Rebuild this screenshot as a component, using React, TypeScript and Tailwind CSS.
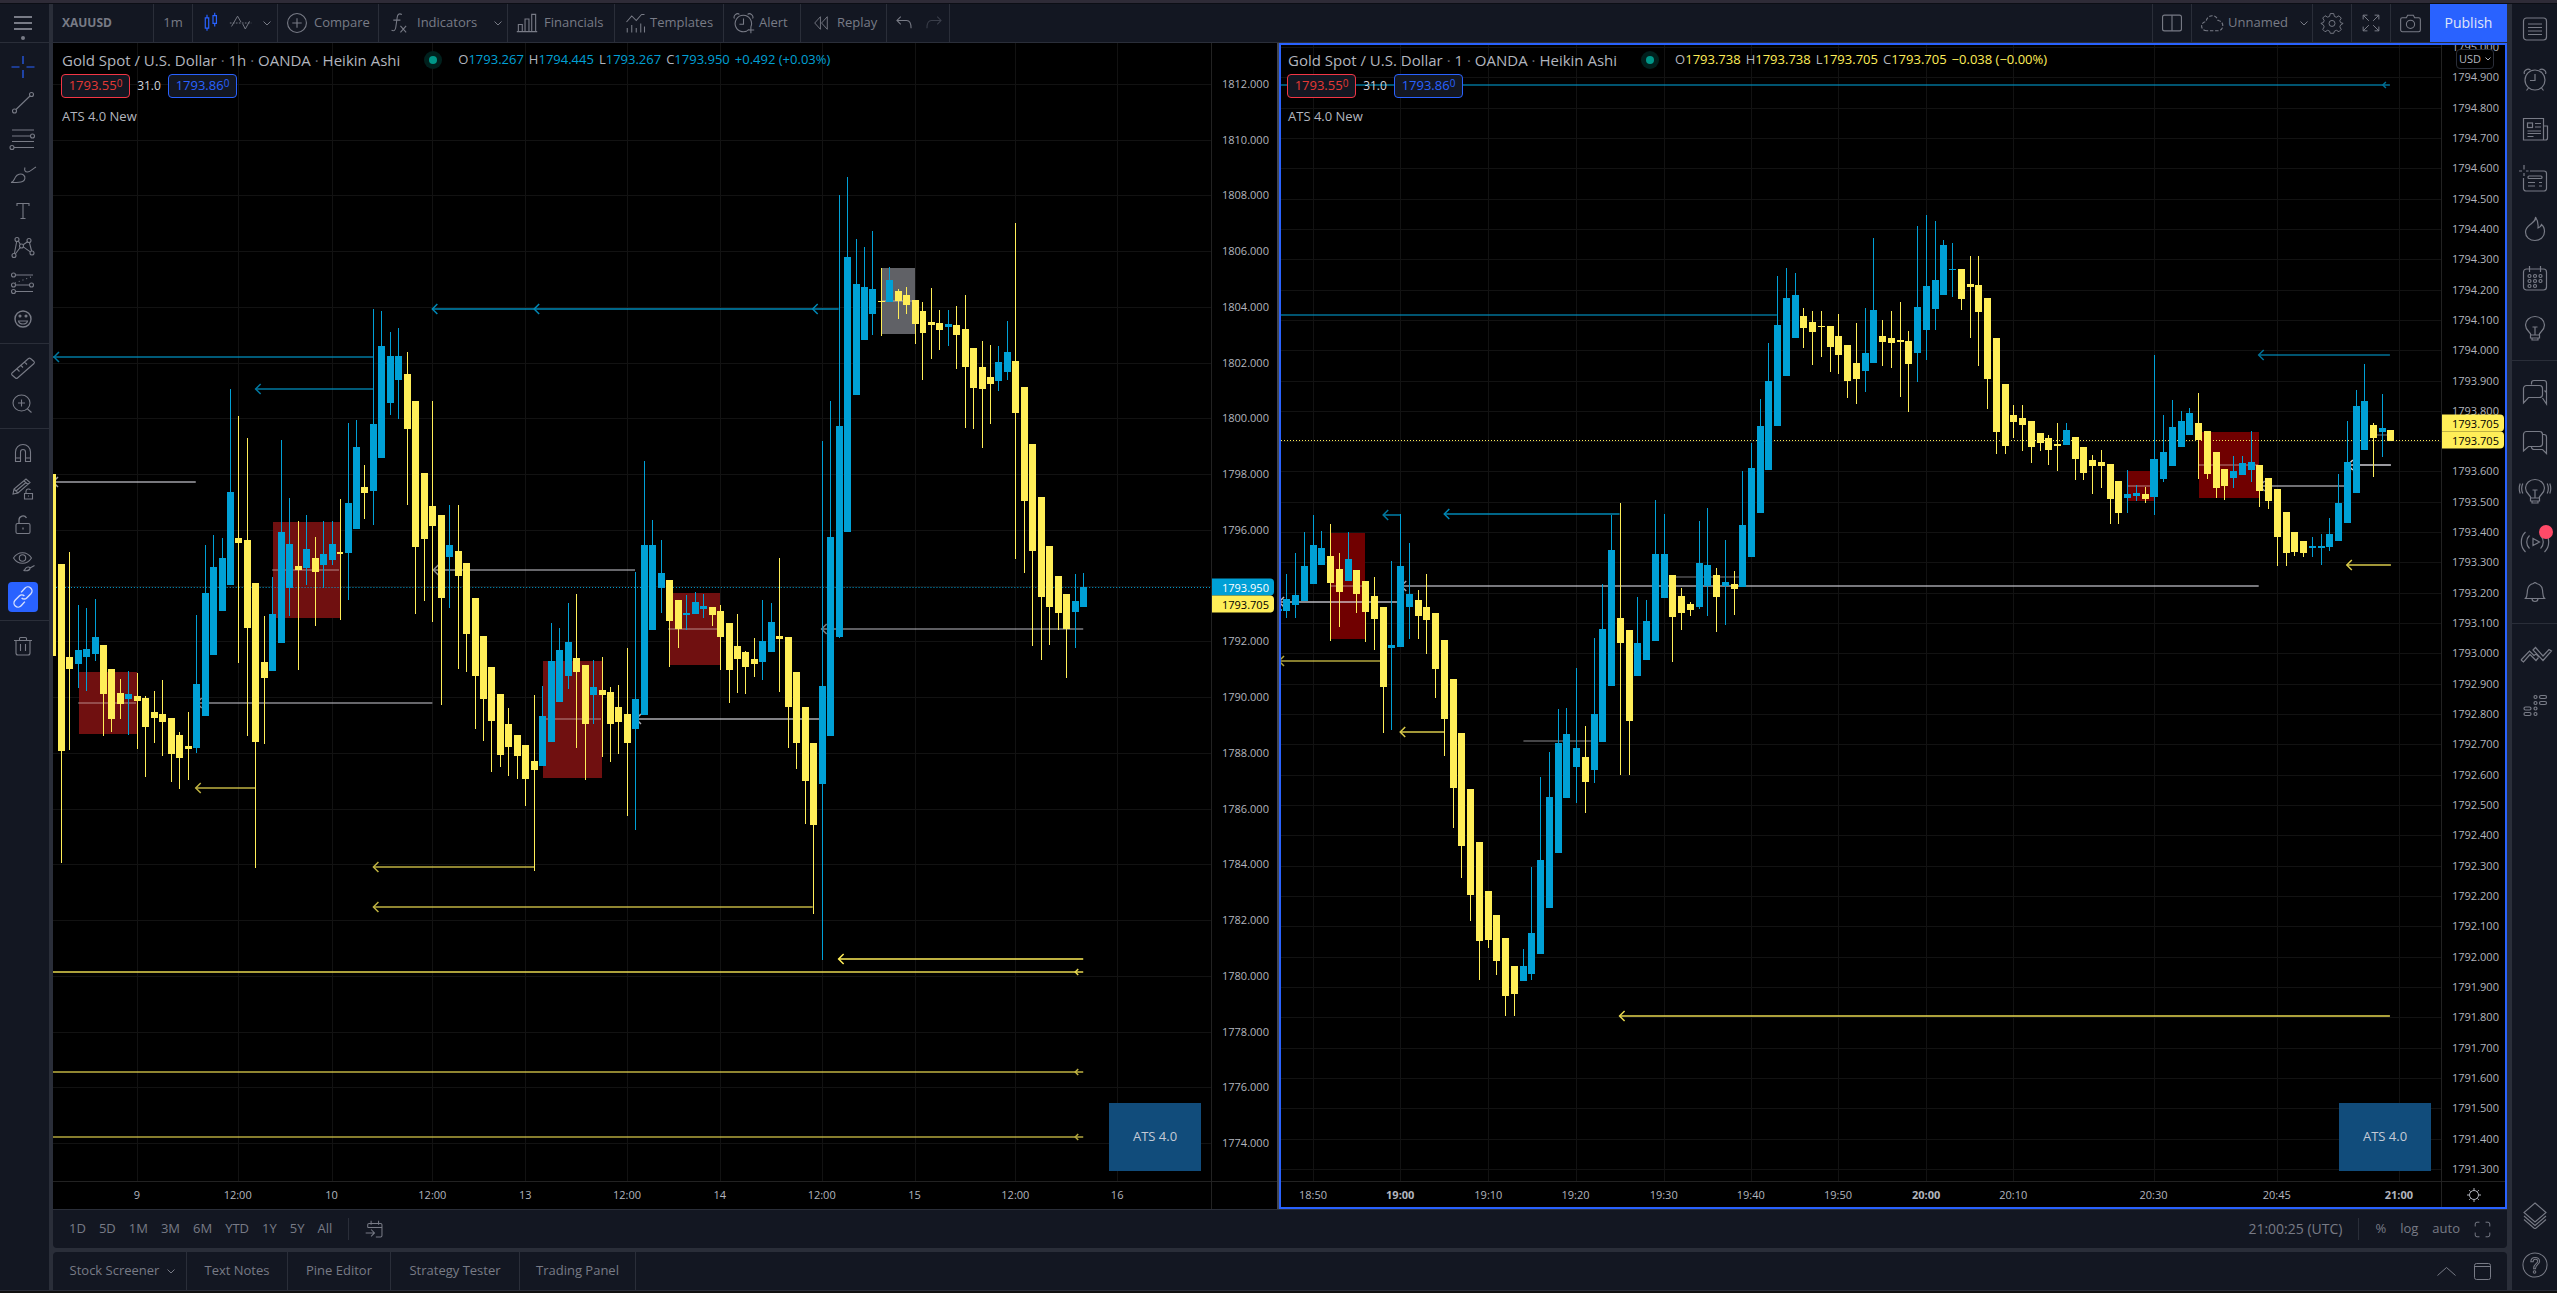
import React from 'react';

type Candle = [number, number, number, number, number, 'u' | 'd'];
type Level = { x1: number; x2: number; y: number; c: 'b' | 'w' | 'y'; o: number; heads?: number[]; small?: boolean };
type Zone = { x: number; y: number; w: number; h: number; fill: string; mid?: number };

/* Each candle: x, high, body top, body bottom, low, direction */
const hourly: Candle[] = [
  [52, 474, 474, 656, 656, 'd'], [61, 564, 564, 751, 863, 'd'], [69, 552, 657, 669, 750, 'd'], [78, 605, 650, 664, 688, 'u'],
  [86, 608, 649, 657, 691, 'u'], [95, 599, 637, 654, 661, 'u'], [103, 645, 645, 694, 736, 'd'], [111, 669, 669, 719, 732, 'd'],
  [120, 679, 693, 704, 719, 'd'], [128, 671, 694, 699, 735, 'u'], [137, 673, 696, 701, 749, 'd'], [145, 696, 698, 727, 777, 'd'],
  [154, 691, 712, 718, 743, 'd'], [162, 680, 714, 722, 756, 'd'], [171, 718, 718, 754, 782, 'd'], [179, 732, 735, 758, 789, 'd'],
  [188, 712, 746, 749, 780, 'd'], [196, 615, 684, 748, 753, 'u'], [205, 545, 593, 716, 716, 'u'], [213, 535, 567, 655, 655, 'u'],
  [222, 538, 558, 611, 611, 'u'], [230, 389, 492, 585, 585, 'u'], [238, 416, 538, 543, 663, 'd'], [247, 438, 540, 628, 736, 'd'],
  [255, 583, 583, 742, 868, 'd'], [264, 616, 662, 678, 744, 'd'], [272, 577, 614, 671, 671, 'u'], [281, 440, 532, 643, 643, 'u'],
  [289, 498, 544, 588, 616, 'u'], [298, 521, 566, 570, 670, 'd'], [306, 515, 549, 568, 585, 'u'], [315, 537, 558, 572, 626, 'd'],
  [323, 521, 554, 565, 588, 'u'], [332, 521, 544, 560, 565, 'u'], [340, 499, 552, 554, 620, 'd'], [349, 423, 503, 553, 600, 'u'],
  [357, 420, 447, 529, 529, 'u'], [365, 465, 487, 493, 519, 'd'], [374, 309, 424, 491, 525, 'u'], [382, 311, 346, 458, 458, 'u'],
  [391, 332, 356, 403, 415, 'u'], [399, 328, 356, 380, 419, 'u'], [408, 352, 374, 429, 505, 'd'], [416, 401, 401, 547, 614, 'd'],
  [425, 473, 473, 539, 601, 'd'], [433, 401, 506, 526, 622, 'd'], [442, 515, 515, 598, 705, 'd'], [450, 505, 545, 557, 608, 'u'],
  [459, 505, 551, 576, 669, 'd'], [467, 563, 563, 634, 672, 'd'], [476, 598, 598, 676, 729, 'd'], [484, 636, 636, 699, 741, 'd'],
  [492, 667, 667, 721, 772, 'd'], [501, 694, 694, 755, 767, 'd'], [509, 708, 724, 747, 776, 'd'], [518, 735, 735, 756, 779, 'd'],
  [526, 745, 745, 779, 806, 'd'], [535, 695, 761, 770, 871, 'd'], [543, 686, 716, 766, 766, 'u'], [552, 623, 661, 742, 742, 'u'],
  [560, 628, 650, 702, 702, 'u'], [569, 603, 642, 676, 689, 'u'], [577, 594, 658, 672, 748, 'd'], [586, 665, 665, 724, 780, 'd'],
  [594, 660, 687, 695, 724, 'u'], [603, 657, 690, 695, 757, 'd'], [611, 687, 692, 724, 762, 'd'], [619, 685, 707, 722, 754, 'd'],
  [628, 648, 714, 743, 816, 'd'], [636, 572, 699, 729, 830, 'u'], [645, 461, 545, 715, 715, 'u'], [653, 520, 545, 630, 630, 'u'],
  [662, 540, 573, 588, 613, 'u'], [670, 580, 580, 621, 667, 'd'], [679, 600, 600, 629, 648, 'd'], [687, 595, 613, 615, 630, 'u'],
  [696, 592, 602, 614, 614, 'u'], [704, 594, 606, 609, 618, 'u'], [713, 607, 607, 615, 626, 'd'], [721, 605, 611, 637, 670, 'd'],
  [730, 623, 623, 670, 703, 'd'], [738, 614, 646, 659, 693, 'd'], [746, 651, 652, 667, 694, 'd'], [755, 638, 659, 664, 677, 'd'],
  [763, 600, 641, 662, 680, 'u'], [772, 603, 622, 652, 652, 'u'], [780, 558, 636, 639, 692, 'd'], [789, 637, 637, 707, 748, 'd'],
  [797, 672, 672, 743, 769, 'd'], [806, 707, 707, 781, 824, 'd'], [814, 743, 743, 825, 914, 'd'], [823, 441, 686, 784, 960, 'u'],
  [831, 401, 537, 736, 736, 'u'], [840, 195, 426, 637, 638, 'u'], [848, 177, 257, 532, 532, 'u'], [857, 239, 284, 395, 395, 'u'],
  [865, 247, 287, 340, 340, 'u'], [873, 231, 289, 314, 335, 'u'], [882, 268, 301, 302, 336, 'd'], [890, 267, 280, 302, 302, 'u'],
  [899, 289, 291, 301, 319, 'd'], [907, 287, 295, 305, 314, 'd'], [916, 300, 300, 324, 344, 'd'], [924, 302, 311, 333, 380, 'd'],
  [933, 288, 322, 325, 359, 'd'], [941, 310, 323, 330, 350, 'd'], [950, 310, 324, 327, 346, 'u'], [958, 306, 325, 335, 369, 'd'],
  [967, 295, 329, 367, 428, 'd'], [975, 348, 348, 388, 429, 'd'], [984, 341, 367, 389, 448, 'd'], [992, 345, 377, 384, 424, 'd'],
  [1000, 346, 362, 381, 391, 'u'], [1009, 321, 352, 372, 380, 'u'], [1017, 223, 361, 413, 559, 'd'], [1026, 387, 387, 501, 573, 'd'],
  [1034, 444, 444, 551, 646, 'd'], [1043, 497, 497, 597, 660, 'd'], [1051, 546, 546, 607, 645, 'd'], [1060, 576, 576, 613, 630, 'd'],
  [1068, 594, 594, 629, 678, 'd'], [1077, 574, 601, 612, 648, 'u'], [1085, 573, 587, 607, 607, 'u'],
];

const minute: Candle[] = [
  [1280, 600, 609, 611, 611, 'u'], [1288, 574, 599, 611, 618, 'u'], [1297, 553, 595, 605, 618, 'u'], [1306, 532, 566, 601, 601, 'u'],
  [1315, 515, 545, 584, 584, 'u'], [1323, 531, 548, 565, 565, 'u'], [1332, 524, 556, 583, 641, 'd'], [1341, 553, 569, 592, 627, 'd'],
  [1350, 532, 559, 581, 581, 'u'], [1358, 570, 570, 594, 613, 'd'], [1367, 581, 581, 612, 642, 'd'], [1376, 577, 596, 619, 650, 'd'],
  [1385, 607, 607, 687, 733, 'd'], [1393, 561, 645, 648, 730, 'u'], [1402, 514, 566, 647, 647, 'u'], [1411, 543, 594, 607, 639, 'u'],
  [1420, 590, 600, 616, 639, 'd'], [1428, 574, 607, 620, 654, 'd'], [1437, 613, 613, 669, 698, 'd'], [1446, 640, 640, 719, 756, 'd'],
  [1455, 679, 679, 788, 828, 'd'], [1463, 733, 733, 846, 878, 'd'], [1472, 789, 789, 895, 921, 'd'], [1481, 842, 842, 941, 980, 'd'],
  [1490, 891, 891, 940, 948, 'd'], [1498, 915, 915, 961, 975, 'd'], [1507, 938, 938, 996, 1016, 'd'], [1516, 966, 966, 994, 1016, 'd'],
  [1525, 949, 966, 981, 981, 'u'], [1533, 867, 933, 974, 980, 'u'], [1542, 777, 860, 954, 954, 'u'], [1551, 752, 797, 908, 908, 'u'],
  [1560, 709, 743, 853, 853, 'u'], [1568, 708, 734, 798, 798, 'u'], [1577, 668, 748, 767, 803, 'u'], [1586, 726, 757, 782, 813, 'd'],
  [1595, 638, 714, 770, 783, 'u'], [1603, 584, 629, 742, 742, 'u'], [1612, 515, 550, 686, 686, 'u'], [1621, 503, 618, 643, 775, 'd'],
  [1630, 630, 630, 721, 775, 'd'], [1638, 597, 643, 676, 676, 'u'], [1647, 600, 621, 660, 660, 'u'], [1656, 500, 554, 641, 641, 'u'],
  [1665, 514, 554, 598, 598, 'u'], [1673, 575, 575, 617, 662, 'd'], [1682, 588, 596, 613, 630, 'd'], [1691, 602, 604, 610, 616, 'd'],
  [1700, 521, 563, 607, 609, 'u'], [1708, 508, 565, 586, 616, 'u'], [1717, 568, 575, 597, 632, 'd'], [1726, 540, 582, 586, 625, 'u'],
  [1735, 571, 584, 589, 615, 'd'], [1743, 471, 525, 587, 587, 'u'], [1752, 443, 468, 557, 557, 'u'], [1761, 399, 426, 513, 513, 'u'],
  [1769, 343, 381, 470, 470, 'u'], [1778, 276, 325, 426, 426, 'u'], [1787, 268, 298, 376, 376, 'u'], [1796, 273, 295, 338, 338, 'u'],
  [1804, 308, 316, 328, 348, 'd'], [1813, 311, 322, 332, 365, 'd'], [1822, 311, 326, 327, 357, 'd'], [1831, 326, 326, 347, 372, 'd'],
  [1839, 314, 336, 355, 374, 'd'], [1848, 345, 345, 381, 398, 'd'], [1857, 323, 363, 379, 404, 'd'], [1866, 308, 353, 371, 392, 'u'],
  [1874, 238, 310, 363, 363, 'u'], [1883, 320, 336, 342, 366, 'd'], [1892, 311, 338, 343, 368, 'd'], [1901, 302, 340, 342, 397, 'd'],
  [1909, 331, 341, 364, 412, 'd'], [1918, 226, 307, 353, 382, 'u'], [1927, 215, 286, 330, 360, 'u'], [1936, 221, 280, 309, 330, 'u'],
  [1944, 240, 245, 295, 295, 'u'], [1953, 243, 269, 270, 297, 'u'], [1962, 269, 269, 299, 310, 'd'], [1971, 256, 284, 287, 338, 'd'],
  [1979, 256, 285, 312, 366, 'd'], [1988, 298, 298, 379, 409, 'd'], [1997, 338, 338, 432, 454, 'd'], [2006, 384, 384, 446, 454, 'd'],
  [2014, 405, 415, 422, 438, 'd'], [2023, 405, 418, 425, 451, 'd'], [2032, 421, 421, 447, 463, 'd'], [2041, 433, 433, 443, 451, 'd'],
  [2049, 435, 438, 450, 465, 'd'], [2058, 423, 444, 446, 471, 'd'], [2067, 423, 430, 445, 445, 'u'], [2076, 437, 437, 459, 480, 'd'],
  [2084, 447, 447, 473, 480, 'd'], [2093, 455, 460, 466, 494, 'd'], [2102, 450, 462, 466, 488, 'd'], [2111, 464, 464, 499, 524, 'd'],
  [2119, 481, 481, 513, 524, 'd'], [2128, 470, 494, 498, 513, 'u'], [2137, 485, 493, 496, 501, 'u'], [2146, 487, 494, 499, 503, 'd'],
  [2154, 355, 459, 497, 515, 'u'], [2163, 415, 452, 479, 482, 'u'], [2172, 400, 427, 466, 466, 'u'], [2181, 411, 421, 447, 447, 'u'],
  [2189, 408, 413, 435, 435, 'u'], [2198, 393, 423, 440, 479, 'd'], [2207, 431, 431, 474, 479, 'd'], [2216, 452, 452, 488, 498, 'd'],
  [2224, 469, 469, 486, 500, 'd'], [2233, 456, 471, 478, 488, 'u'], [2242, 456, 463, 475, 475, 'u'], [2251, 431, 462, 470, 482, 'u'],
  [2259, 465, 465, 491, 507, 'd'], [2268, 478, 478, 501, 509, 'd'], [2277, 489, 489, 537, 566, 'd'], [2286, 512, 512, 553, 566, 'd'],
  [2294, 532, 532, 552, 556, 'd'], [2303, 541, 541, 553, 557, 'd'], [2312, 537, 546, 548, 557, 'u'], [2321, 534, 546, 548, 565, 'u'],
  [2329, 518, 534, 547, 551, 'u'], [2338, 474, 503, 541, 541, 'u'], [2347, 421, 462, 523, 523, 'u'], [2356, 390, 406, 493, 493, 'u'],
  [2364, 364, 401, 450, 450, 'u'], [2373, 423, 425, 438, 477, 'd'], [2382, 394, 428, 432, 457, 'u'], [2390, 430, 430, 441, 441, 'd'],
];

const hourlyLevels: Level[] = [
  { x1: 53, x2: 374, y: 357, c: 'b', o: 0.75, heads: [54] },
  { x1: 256, x2: 374, y: 389, c: 'b', o: 0.75, heads: [256] },
  { x1: 433, x2: 840, y: 309, c: 'b', o: 0.85, heads: [433, 535, 814] },
  { x1: 53, x2: 196, y: 482, c: 'w', o: 0.7, heads: [53] },
  { x1: 433, x2: 636, y: 570, c: 'w', o: 0.6, heads: [434] },
  { x1: 196, x2: 433, y: 703, c: 'w', o: 0.6, heads: [197] },
  { x1: 636, x2: 821, y: 719, c: 'w', o: 0.75, heads: [637] },
  { x1: 823, x2: 1085, y: 629, c: 'w', o: 0.55, heads: [823] },
  { x1: 196, x2: 256, y: 788, c: 'y', o: 0.75, heads: [196] },
  { x1: 374, x2: 535, y: 867, c: 'y', o: 0.75, heads: [374] },
  { x1: 374, x2: 814, y: 907, c: 'y', o: 0.75, heads: [374] },
  { x1: 840, x2: 1085, y: 959, c: 'y', o: 1, heads: [840] },
  { x1: 53, x2: 1085, y: 972, c: 'y', o: 0.9, heads: [1077], small: true },
  { x1: 53, x2: 1085, y: 1072, c: 'y', o: 0.75, heads: [1077], small: true },
  { x1: 53, x2: 1085, y: 1137, c: 'y', o: 0.7, heads: [1077], small: true },
];

const minuteLevels: Level[] = [
  { x1: 1283, x2: 2390, y: 85, c: 'b', o: 0.7, heads: [2383], small: true },
  { x1: 1283, x2: 1778, y: 315, c: 'b', o: 0.7 },
  { x1: 1385, x2: 1402, y: 515, c: 'b', o: 0.75, heads: [1385] },
  { x1: 1446, x2: 1621, y: 514, c: 'b', o: 0.85, heads: [1446] },
  { x1: 2259, x2: 2390, y: 355, c: 'b', o: 0.7, heads: [2259] },
  { x1: 1283, x2: 1400, y: 602, c: 'w', o: 0.8, heads: [1281] },
  { x1: 1402, x2: 2259, y: 586, c: 'w', o: 0.7, heads: [1403] },
  { x1: 1525, x2: 1593, y: 741, c: 'w', o: 0.4 },
  { x1: 1673, x2: 1743, y: 577, c: 'w', o: 0.35 },
  { x1: 2259, x2: 2347, y: 486, c: 'w', o: 0.65, heads: [2260] },
  { x1: 2347, x2: 2391, y: 465, c: 'w', o: 0.9, heads: [2348] },
  { x1: 2377, x2: 2388, y: 435, c: 'w', o: 0.3 },
  { x1: 1283, x2: 1385, y: 661, c: 'y', o: 0.7, heads: [1281] },
  { x1: 1402, x2: 1446, y: 732, c: 'y', o: 0.85, heads: [1402] },
  { x1: 1621, x2: 2390, y: 1016, c: 'y', o: 0.9, heads: [1621] },
  { x1: 2347, x2: 2391, y: 565, c: 'y', o: 0.85, heads: [2347] },
];

const hourlyZones: Zone[] = [
  { x: 79, y: 672, w: 58, h: 62, fill: '#701010', mid: 703 },
  { x: 273, y: 522, w: 67, h: 96, fill: '#701010', mid: 570 },
  { x: 544, y: 661, w: 59, h: 117, fill: '#701010', mid: 719 },
  { x: 670, y: 593, w: 51, h: 72, fill: '#701010', mid: 629 },
  { x: 883, y: 229 + 39, w: 33, h: 66, fill: '#606166', mid: 301 },
];

const minuteZones: Zone[] = [
  { x: 1333, y: 533, w: 34, h: 106, fill: '#700000', mid: 586 },
  { x: 2129, y: 471, w: 26, h: 30, fill: '#700000', mid: 486 },
  { x: 2199, y: 432, w: 60, h: 66, fill: '#700000', mid: 465 },
];

const ink = { b: '#00a0d6', w: '#e6e6ee', y: '#ffee58' };

type Tick = { at: number; label: string; strong?: boolean };
type Tag = { at: number; label: string; blue?: boolean };
type Pane = {
  box: [number, number, number, number];
  candles: Candle[];
  levels: Level[];
  zones: Zone[];
  prices: Tick[];
  times: Tick[];
  last: number;
  lastInk: string;
  tags: Tag[];
};

const range = (n: number) => Array.from({ length: n }, (_, i) => i);

const left: Pane = {
  box: [53, 43, 1160, 1138],
  candles: hourly,
  levels: hourlyLevels,
  zones: hourlyZones,
  prices: range(20).map((i) => ({ at: Math.round(84 + i * 55.74), label: `${1812 - i * 2}.000` })),
  times: [
    { at: 137, label: '9' }, { at: 238, label: '12:00' }, { at: 332, label: '10' }, { at: 433, label: '12:00' },
    { at: 526, label: '13' }, { at: 628, label: '12:00' }, { at: 721, label: '14' }, { at: 823, label: '12:00' },
    { at: 916, label: '15' }, { at: 1017, label: '12:00' }, { at: 1119, label: '16' },
  ],
  last: 587,
  lastInk: '#00a0d6',
  tags: [{ at: 587, label: '1793.950', blue: true }, { at: 604, label: '1793.705' }],
};

const right: Pane = {
  box: [1283, 45, 1158, 1136],
  candles: minute,
  levels: minuteLevels,
  zones: minuteZones,
  prices: range(38).map((i) => ({ at: Math.round(47 + i * 30.32), label: (1795 - i * 0.1).toFixed(3) })),
  times: [
    { at: 1315, label: '18:50' }, { at: 1402, label: '19:00', strong: true }, { at: 1490, label: '19:10' }, { at: 1577, label: '19:20' },
    { at: 1665, label: '19:30' }, { at: 1752, label: '19:40' }, { at: 1839, label: '19:50' }, { at: 1927, label: '20:00', strong: true },
    { at: 2014, label: '20:10' }, { at: 2154, label: '20:30' }, { at: 2277, label: '20:45' }, { at: 2399, label: '21:00', strong: true },
  ],
  last: 440,
  lastInk: '#ffee58',
  tags: [{ at: 423, label: '1793.705' }, { at: 440, label: '1793.705' }],
};

function Plot({ pane }: { pane: Pane }) {
  const [bx, by, bw, bh] = pane.box;
  return (
    <svg className="absolute inset-0 h-full w-full" viewBox={pane.box.join(' ')} preserveAspectRatio="none" aria-hidden="true">
      <g fill="#ffffff" opacity="0.07" shapeRendering="crispEdges">
        {pane.prices.map((t) => <rect key={t.label} x={bx} y={t.at} width={bw} height="1" />)}
        {pane.times.map((t) => <rect key={t.at} x={t.at} y={by} width="1" height={bh} />)}
      </g>
      {pane.zones.map((z) => (
        <g key={z.x} shapeRendering="crispEdges">
          <rect x={z.x} y={z.y} width={z.w} height={z.h} fill={z.fill} />
          {z.mid && <rect x={z.x - 1} y={z.mid - 1} width={z.w} height="2" fill="#ffffff" opacity="0.25" />}
        </g>
      ))}
      {pane.levels.map((l, i) => {
        const r = l.small ? 3 : 5;
        return (
          <g key={i} stroke={ink[l.c]} opacity={l.o} fill="none">
            <path d={`M${l.x1} ${l.y}H${l.x2}`} strokeWidth="1.6" />
            {l.heads?.map((h) => <path key={h} d={`M${h + r} ${l.y - r}l${-r} ${r}l${r} ${r}`} strokeWidth="1.5" />)}
          </g>
        );
      })}
      <path d={`M${bx} ${pane.last + 0.5}H${bx + bw}`} stroke={pane.lastInk} strokeDasharray="1 2" shapeRendering="crispEdges" />
      <g shapeRendering="crispEdges">
        {pane.candles.map(([x, hi, top, bottom, lo, dir]) => (
          <g key={x} fill={dir === 'u' ? '#00a0d6' : '#ffee58'}>
            <rect x={x} y={hi} width="1" height={lo - hi} />
            <rect x={x - 3} y={top} width="7" height={bottom - top} />
          </g>
        ))}
      </g>
    </svg>
  );
}

type LegendProps = { interval: string; ohlc: string[]; change: string; tone: string; inset: string };

function Legend({ interval, ohlc, change, tone, inset }: LegendProps) {
  return (
    <div className={`absolute top-0 left-0 ${inset} text-[#b2b5be]`}>
      <div className="flex h-5 items-center whitespace-nowrap">
        <h2 className="text-[15px]">
          Gold Spot / U.S. Dollar <span className="text-[#6a6d78]">·</span> {interval} <span className="text-[#6a6d78]">·</span> OANDA{' '}
          <span className="text-[#6a6d78]">·</span> Heikin Ashi
        </h2>
        <span className="ml-6 flex size-[18px] items-center justify-center rounded-full bg-[#00201d]">
          <span className="size-2 rounded-full bg-[#009688]" />
        </span>
        <p className="ml-4 flex gap-[5px] text-[13px]">
          {['O', 'H', 'L', 'C'].map((k, i) => (
            <span key={k}>{k}<span className={tone}>{ohlc[i]}</span></span>
          ))}
          <span className={tone}>{change}</span>
        </p>
      </div>
      <div className="-ml-px mt-1 flex items-center">
        <button className="flex h-6 w-[69px] items-center justify-center rounded border border-[#f23645] bg-[#131722] text-[13px] text-[#e53935]">
          1793.55<sup className="top-[-3px] text-[10px]">0</sup>
        </button>
        <span className="w-[38px] text-center text-xs text-[#d1d4dc]">31.0</span>
        <button className="flex h-6 w-[69px] items-center justify-center rounded border border-[#2962ff] bg-[#131722] text-[13px] text-[#2962ff]">
          1793.86<sup className="top-[-3px] text-[10px]">0</sup>
        </button>
      </div>
      <p className="mt-2.5 text-[13px] leading-4">ATS 4.0 New</p>
    </div>
  );
}

function Chart({ pane, legend, active }: { pane: Pane; legend: LegendProps; active?: boolean }) {
  const [bx, by, bw, bh] = pane.box;
  return (
    <section className={`flex min-w-0 flex-1 flex-col bg-black font-['Open_Sans',sans-serif] ${active ? 'border-2 border-[#2962ff]' : ''}`}>
      <div className="flex flex-1">
        <div className="relative min-w-0 flex-1 overflow-hidden">
          <Plot pane={pane} />
          <Legend {...legend} />
          <div className="absolute right-2.5 bottom-2.5 flex h-17 w-[92px] items-center justify-center bg-[#114c7b] text-[13px] text-[#c5cbd6]">ATS 4.0</div>
        </div>
        <div className={`relative shrink-0 overflow-hidden border-l border-[#222222] text-[11px] text-[#b2b5be] ${active ? 'w-16' : 'w-[66px]'}`}>
          {pane.prices.map((t) => (
            <span key={t.label} className="absolute left-2.5 -translate-y-1/2 leading-4" style={{ top: `${((t.at - by) / bh) * 100}%` }}>{t.label}</span>
          ))}
          {pane.tags.map((t) => (
            <span
              key={t.at}
              className={`absolute left-0 h-[17px] w-[62px] -translate-y-1/2 rounded-r-sm pl-2.5 leading-[17px] ${t.blue ? 'bg-[#00a0d6] text-white' : 'bg-[#ffee58] text-black'}`}
              style={{ top: `${((t.at - by) / bh) * 100}%` }}
            >
              {t.label}
            </span>
          ))}
          {active && (
            <button className="absolute top-1 left-3.5 flex h-5 w-[38px] items-center justify-center gap-1 rounded border border-[#2a2e39] bg-black text-[11px]">
              USD
              <svg width="6" height="4" viewBox="0 0 6 4" fill="none" stroke="currentColor"><path d="M.5.5 3 3 5.5.5" /></svg>
            </button>
          )}
        </div>
      </div>
      <div className={`flex shrink-0 border-t border-[#222222] text-[11px] text-[#b2b5be] ${active ? 'h-[26px]' : 'h-7'}`}>
        <div className="relative min-w-0 flex-1 overflow-hidden">
          {pane.times.map((t) => (
            <span
              key={t.at}
              className={`absolute top-[5px] -translate-x-1/2 leading-4 ${t.strong ? 'font-bold' : ''}`}
              style={{ left: `${((t.at - bx) / bw) * 100}%` }}
            >
              {t.label}
            </span>
          ))}
        </div>
        <div className={`flex shrink-0 items-center justify-center border-l border-[#222222] ${active ? 'w-16' : 'w-[66px]'}`}>
          {active && (
            <button aria-label="Axis settings" className="text-[#b2b5be]">
              <svg width="16" height="16" viewBox="0 0 16 16" fill="none" stroke="currentColor">
                <circle cx="8" cy="8" r="4.5" />
                <path d="M8 1v2M8 13v2M1 8h2M13 8h2M3.2 3.2l1.4 1.4M11.4 11.4l1.4 1.4M3.2 12.8l1.4-1.4M11.4 4.6l1.4-1.4" />
              </svg>
            </button>
          )}
        </div>
      </div>
    </section>
  );
}

function Icon({ children, size = 28 }: { children: React.ReactNode; size?: number }) {
  return (
    <svg width={size} height={size} viewBox="0 0 28 28" fill="none" stroke="currentColor" strokeWidth="1.1" className="shrink-0" aria-hidden="true">
      {children}
    </svg>
  );
}

function Chevron() {
  return <svg width="8" height="5" viewBox="0 0 8 5" fill="none" stroke="currentColor" className="shrink-0" aria-hidden="true"><path d="M.5.5 4 4 7.5.5" /></svg>;
}

const drawing: { label: string; art: React.ReactNode }[][] = [
  [
    { label: 'Cross', art: <g stroke="#2962ff" strokeWidth="1.2"><path d="M14 3v8M14 17v8M2.500 14h8M17.500 14h8" /></g> },
    { label: 'Trend line', art: <><circle cx="5.500" cy="22" r="2" /><circle cx="22.500" cy="5.500" r="2" /><path d="M7 20.500 21 7" /></> },
    { label: 'Fibonacci lines', art: <><path d="M3 5h22M3 11h18M3 16.500h22M5 22.500h20" /><circle cx="23.500" cy="11" r="2" /><circle cx="3" cy="22.500" r="2" /></> },
    { label: 'Brush', art: <><path d="M2 21.500c3-.5 3-3 4.500-5.500 1.500-2.500 5.500-4 8-2 2.500 2 1.500 5.500-1 6.500-3 1.200-7 1-11.500 1zM27 6c-3 1.500-6 5-8.500 5C16 11 15 9 16 6.500" /></> },
    { label: 'Text', art: <path d="M8 9V6.500h12V9M14 6.500v15M11.500 21.500h5" /> },
    { label: 'Pattern', art: <><circle cx="8" cy="6.500" r="2" /><circle cx="20" cy="7.500" r="2" /><circle cx="12.500" cy="13" r="2" /><circle cx="5" cy="22.500" r="2" /><circle cx="23" cy="20" r="2" /><path d="M7.700 8.500 5.400 20.500M9.400 8l2 3.500M14.200 11.700l4.300-3M20.400 9.500l2.200 8.500M11.200 14.500 6.300 21M14.300 13.900l7 5" /></> },
    { label: 'Forecast', art: <><path d="M6 6h18M6 16h15M6 22.500h18" /><path d="m6 14 16-6" strokeDasharray="1 3" /><circle cx="4.500" cy="6" r="2" /><circle cx="4.500" cy="16" r="2" /><circle cx="22.500" cy="16" r="2" /><circle cx="4.500" cy="22.500" r="2" /></> },
    { label: 'Emoji', art: <><circle cx="14" cy="14" r="8" strokeWidth="1.4" /><path d="M9.500 16c1 4 8 4 9 0z" /><circle cx="11" cy="11" r="1" fill="currentColor" /><circle cx="17" cy="11" r="1" fill="currentColor" /></> },
  ],
  [
    { label: 'Measure', art: <><path d="m3 19 16.500-14.500a1.500 1.500 0 0 1 2 0l3.500 3a1.500 1.500 0 0 1 0 2L8.500 24a1.500 1.500 0 0 1-2 0L3 21a1.500 1.500 0 0 1 0-2zM8 15l2.500 2.500M12 11.500l2 2M15.500 8l2.500 2.500" /></> },
    { label: 'Zoom in', art: <><ellipse cx="12.500" cy="13" rx="8.500" ry="8" /><path d="M12.500 9.500v7M9 13h7M18.500 19l4 3.500" /></> },
  ],
  [
    { label: 'Magnet', art: <><path d="M6.500 22.500V13a7.500 7.500 0 0 1 15 0v9.500h-5V13a2.500 2.500 0 0 0-5 0v9.500zM6.500 19h5M16.500 19h5" /></> },
    { label: 'Stay in drawing mode', art: <><path d="m4 19 1-5L17 4l4 3.500L9 18zM5 14l4 4M15 6l4 3.500M7 16l10-8.500" /><path d="M15.500 18.500h8v5.500h-8zM17 18.500V16a2.500 2.500 0 0 1 4.500-1" /><path d="M19.500 20.500v1" /></> },
    { label: 'Lock drawings', art: <><rect x="7" y="12.500" width="14" height="10" rx="1.500" /><path d="M10 12.500V9a4 4 0 0 1 7.500-2M14 16.500v2" strokeWidth="1.300" /></> },
    { label: 'Hide drawings', art: <><path d="M4.500 11C9 4 18 4 22.500 11c-4.500 7-13.500 7-18 0z" /><circle cx="13.500" cy="11" r="3.200" /><path d="M14.500 23.500c3 .5 6 0 6.500-2s-3.500-2-4.300-.3c-.4 1-1 2-2.200 2.300zM25.500 18.500 21 21" /></> },
  ],
];

const panels: { label: string; art: React.ReactNode; live?: boolean }[][] = [
  [
    { label: 'Watchlist', art: <><rect x="2.500" y="3" width="23" height="22" rx="3" /><path d="M7 9h14M7 12.500h14M7 16h14M7 19.500h14" /></> },
    { label: 'Alerts', art: <><circle cx="14" cy="15" r="10" /><path d="M14 9v6.500H9M3.500 9c-1.500-3 3-6.500 6-4M24.500 9c1.500-3-3-6.500-6-4M7.500 23l-2 2.500M20.500 23l2 2.500" /></> },
    { label: 'News', art: <><path d="M2.500 25V3.500h20V25zM22.500 11h4v12c0 1.500-1 2-2 2h-22" /><rect x="6.500" y="8" width="5" height="4.500" /><path d="M14 8.500h6M14 12h6M6.500 16h13.500M6.500 18.500h13.500M6.500 21.500h6" /></> },
    { label: 'Data window', art: <><path d="M9 6h14a2.500 2.500 0 0 1 2.500 2.500v15A2.500 2.500 0 0 1 23 26H5a2.500 2.500 0 0 1-2.500-2.500V13M3 0v4.500M3 8v3M-2 6h3M5 6h2.500" /><rect x="7" y="11" width="14" height="2.500" rx="1" /><path d="M7 17.500h7M7 21h7M18 17.500h3M18 21h3" /></> },
    { label: 'Hotlists', art: <path d="M14.500 2c.5 3-1 4-4 6.500C7 11.500 4.500 13 4.500 17c0 5 4 8.500 9.500 8.500s9.500-4 9.500-9c0-3-1-5.500-3-7-.5 2-1.500 3-3.500 3.500.5-4-.5-8-2.500-11z" /> },
    { label: 'Calendar', art: <><rect x="2.500" y="4" width="23" height="21" rx="3" /><path d="M8.500 1v6M19.500 1v6" /><g><circle cx="8.500" cy="11" r="1.500" /><circle cx="14" cy="11" r="1.500" /><circle cx="19.500" cy="11" r="1.500" /><circle cx="8.500" cy="16" r="1.500" /><circle cx="14" cy="16" r="1.500" /><circle cx="19.500" cy="16" r="1.500" /><circle cx="8.500" cy="21" r="1.500" /><circle cx="14" cy="21" r="1.500" /></g></> },
    { label: 'My ideas', art: <path d="M10 20c-.5-3-5.500-4.500-5.500-10a9.500 8.500 0 0 1 19 0c0 5.500-5 7-5.500 10zM9.500 20h9v3h-9zM11 23v2h6v-2M14 20v-8M11.500 12h5" /> },
  ],
  [
    { label: 'Public chats', art: <path d="M10.500 6.500V5A2.500 2.500 0 0 1 13 2.500h10A2.500 2.500 0 0 1 25.500 5v21l-4-6M25.500 14.500l-2-2M5.500 7.500h13a3 3 0 0 1 3 3v6a3 3 0 0 1-3 3h-11l-5 5.500V10.500a3 3 0 0 1 3-3z" /> },
    { label: 'Private chats', art: <path d="M5.500 3.500h13a3 3 0 0 1 3 3v9a3 3 0 0 1-3 3h-11l-5 4.500V6.500a3 3 0 0 1 3-3zM21.500 6.500h1.500A2.500 2.500 0 0 1 25.500 9v16.500l-4-4H13A2.500 2.500 0 0 1 10.500 19" /> },
    { label: 'Ideas stream', art: <path d="M10 20c-.5-3-5.500-4.500-5.500-10a9.500 8.500 0 0 1 19 0c0 5.500-5 7-5.500 10zM9.500 20h9v3h-9zM11 23v2h6v-2M14 20v-8M11.500 12h5M1.800 5.500a12 12 0 0 0 0 10M-.8 5.500a14 14 0 0 0 0 10M26.200 5.500a12 12 0 0 1 0 10M28.800 5.500a14 14 0 0 1 0 10" /> },
    { label: 'Streams', live: true, art: <path d="M12 10.500v7l6.500-3.500zM8.500 7.500a9 9 0 0 0 0 13M4.500 4a14 14 0 0 0 0 20M19.500 7.500a9 9 0 0 1 0 13M23.500 4a14 14 0 0 1 0 20" /> },
    { label: 'Notifications', art: <path d="M4.500 20.500c2-2 1.500-5 2-8.500.5-3.500 3-6 6-6.500a1.800 1.800 0 0 1 3 0c3 .5 5.500 3 6 6.500.5 3.500 0 6.500 2 8.500zM11 20.500c0 4 6 4 6 0" /> },
  ],
  [
    { label: 'Order panel', art: <path d="m0 19 8.500-9 4.500 4.500 2-1.500 2.500 2.500M0 19l2.500 2 6.500-7.500 6 6 2.500-3M12 9l2.500-2.500 7.500 8.500L28 8.500l2.500 1.500-8.500 9.500z" /> },
    { label: 'Depth of market', art: <><rect x="3" y="16" width="7" height="3" rx="1.500" /><rect x="3" y="21.500" width="7" height="3" rx="1.500" /><rect x="18.500" y="4.500" width="7" height="3" rx="1.500" /><rect x="18.500" y="10.500" width="7" height="3" rx="1.500" /><circle cx="14.500" cy="6" r="1.500" /><circle cx="14.500" cy="12" r="1.500" /><circle cx="14.500" cy="17.500" r="1.500" /><circle cx="14.500" cy="23" r="1.500" /></> },
  ],
];

function Segment({ width, children, label }: { width: string; children: React.ReactNode; label?: string }) {
  return <button aria-label={label} className={`flex h-full shrink-0 items-center border-r border-[#2a2e39] ${width}`}>{children}</button>;
}

const tabs = [
  { label: 'Stock Screener', width: 'w-[134px] pl-1.5', menu: true },
  { label: 'Text Notes', width: 'w-[101px]' },
  { label: 'Pine Editor', width: 'w-[103px]' },
  { label: 'Strategy Tester', width: 'w-[129px]' },
  { label: 'Trading Panel', width: 'w-[116px]' },
];

export default function App() {
  return (
    <div className="flex min-h-screen flex-col bg-[#2a2e39] font-['Open_Sans',sans-serif] text-[13px] text-[#787b86]">
      <div className="h-1 shrink-0 border-b border-[#0c0e15] bg-[#2e2b37]" />
      <div className="flex flex-1 gap-x-1">
        <nav aria-label="Drawing tools" className="flex w-[49px] shrink-0 flex-col bg-[#131722]">
          <button aria-label="Menu" className="flex h-[39px] w-full flex-col items-center gap-1 border-b border-[#2a2e39] pt-3 pr-1">
            <span className="h-0.5 w-[18px] bg-current" />
            <span className="h-0.5 w-[18px] bg-current" />
            <span className="h-0.5 w-[18px] bg-current" />
            <span className="mt-0.5 size-1 rounded-full bg-current" />
          </button>
          <div className="pt-1.5">
            {drawing.map((group, g) => (
              <div key={g} className={g === 2 ? '' : 'mb-1.5 border-b border-[#2a2e39] pb-1.5'}>
                {group.map((t) => (
                  <button key={t.label} aria-label={t.label} className="flex h-9 w-[46px] items-center justify-center"><Icon>{t.art}</Icon></button>
                ))}
              </div>
            ))}
            <button aria-label="Sync drawings" className="mt-[3px] mb-2 ml-2 flex h-[30px] w-[30px] items-center justify-center rounded bg-[#2962ff] text-[#d6e0ff]">
              <Icon size={26}><path d="m12 9 4-4.500a4.300 4.300 0 0 1 6.500 6L18 15c-1.500 1.500-4 1.500-5.500 0M16 19l-4 4.500a4.300 4.300 0 0 1-6.500-6L10 13c1.500-1.500 4-1.500 5.500 0" strokeWidth="1.500" /></Icon>
            </button>
            <div className="border-t border-[#2a2e39] pt-[7px]">
              <button aria-label="Remove drawings" className="flex h-9 w-[46px] items-center justify-center">
                <Icon><path d="M5 8.500h18M10.500 8.500V6.500a1 1 0 0 1 1-1h5a1 1 0 0 1 1 1v2M7 8.500V21a2 2 0 0 0 2 2h10a2 2 0 0 0 2-2V8.500M11.500 12v7M16.500 12v7" /></Icon>
              </button>
            </div>
          </div>
        </nav>

        <main className="flex min-w-0 flex-1 flex-col">
          <header className="flex h-[38px] shrink-0 items-center bg-[#131722]">
            <Segment width="w-[101px] pl-[9px]"><span className="text-xs font-bold">XAUUSD</span></Segment>
            <Segment width="w-[39px] justify-center">1m</Segment>
            <Segment width="w-[85px] pl-2" label="Chart type">
              <Icon size={24}><path d="M5 8h4v12H5zM7 4.500V8M7 20v3M14 5.500h4v9h-4zM16 2v3.500M16 14.500V18" stroke="#2962ff" strokeWidth="1.400" /></Icon>
              <span className="ml-1"><Icon size={24}><path d="m3 18 7-12 4 7M16 15l3 6 5-9" /><path d="M1 14h25" strokeDasharray="2 1.500" /></Icon></span>
              <span className="ml-2.5"><Chevron /></span>
            </Segment>
            <Segment width="w-[101px] gap-1.5 pl-2">
              <Icon size={22}><circle cx="14" cy="14" r="12" strokeWidth="1.400" /><path d="M14 8v12M8 14h12" strokeWidth="1.400" /></Icon>Compare
            </Segment>
            <Segment width="w-[129px] pl-2.5">
              <Icon size={20}><path d="M18 2c-4-2-6 0-6.500 4L9.500 20c-.5 4-2.500 6-6 4M6 10h10M16 18l8 9M24 18l-8 9" strokeWidth="1.500" /></Icon>
              <span className="ml-2">Indicators</span><span className="ml-[17px]"><Chevron /></span>
            </Segment>
            <Segment width="w-[107px] gap-1.5 pl-2">
              <Icon size={22}><path d="M3 25V16h5v9zM11.500 25V9h5v16zM20 25V3h5v22zM1 25h26" strokeWidth="1.400" /></Icon>Financials
            </Segment>
            <Segment width="w-[109px] gap-1 pl-2.5">
              <Icon size={21}><path d="m2 12 7-8 6 6 7-8M22 2h4M3 26v-6M9 26V16M15 26v-6M21 26V14M26 26v-8" strokeWidth="1.400" /></Icon>Templates
            </Segment>
            <Segment width="w-[77px] gap-1 pl-2">
              <Icon size={23}><path d="M21 21a10 10 0 1 1 2-3M14 8v7H9M3 8C1 5 6 0 9 3M25 8c2-3-3-8-6-5M23 18v8M19 22h8" strokeWidth="1.300" /></Icon>Alert
            </Segment>
            <Segment width="w-[86px] gap-2 pl-3">
              <Icon size={16}><path d="M13 3 3 14l10 11zM25 3 15 14l10 11z" strokeWidth="1.600" /></Icon>Replay
            </Segment>
            <div className="flex h-full w-[63px] items-center gap-3 border-r border-[#2a2e39] pl-2">
              <button aria-label="Undo"><Icon size={18}><path d="m9 4-6 6 6 6M3 10h15c4 0 7 4 7 12" strokeWidth="1.600" /></Icon></button>
              <button aria-label="Redo" className="text-[#3a3e4a]"><Icon size={18}><path d="m19 4 6 6-6 6M25 10H10c-4 0-7 4-7 12" strokeWidth="1.600" /></Icon></button>
            </div>
            <div className="ml-auto flex h-full items-center border-l border-[#2a2e39]">
              <Segment width="w-[39px] justify-center" label="Layout"><Icon size={22}><rect x="2" y="4" width="24" height="20" rx="2.500" strokeWidth="1.400" /><path d="M14 4v20" strokeWidth="1.400" /></Icon></Segment>
              <Segment width="w-[121px] gap-1 pl-2">
                <Icon size={24}><path d="M8 23c-8 0-8-10-1-10.500C8 4 19 3 21 11c8 1 7 12 0 12z" strokeDasharray="4 2" strokeWidth="1.300" /></Icon>Unnamed
                <span className="ml-2"><Chevron /></span>
              </Segment>
              <Segment width="w-[39px] justify-center" label="Settings">
                <Icon size={24}><path d="M12 3h4l.8 3.300 2.300 1 3-1.700 2.700 2.700-1.700 3 1 2.300L27 14.500v0l-2.900 1.700-1 2.300 1.700 3-2.700 2.700-3-1.700-2.300 1L16 26h-4l-.8-2.500-2.300-1-3 1.700-2.700-2.700 1.700-3-1-2.300L1 14.500l2.900-1 1-2.300-1.700-3 2.700-2.700 3 1.700 2.300-1z" /><circle cx="14" cy="14.500" r="3.500" /></Icon>
              </Segment>
              <Segment width="w-[39px] justify-center" label="Fullscreen"><Icon size={20}><path d="M3 9V3h6M19 3h6v6M25 19v6h-6M9 25H3v-6M3 3l8 8M25 3l-8 8M25 25l-8-8M3 25l8-8" strokeWidth="1.400" /></Icon></Segment>
              <button aria-label="Snapshot" className="flex w-[39px] justify-center"><Icon size={23}><path d="M4 7h5l1.500-3h7L19 7h5a2 2 0 0 1 2 2v13a2 2 0 0 1-2 2H4a2 2 0 0 1-2-2V9a2 2 0 0 1 2-2z" strokeWidth="1.300" /><circle cx="14" cy="15" r="5" strokeWidth="1.300" /></Icon></button>
              <button className="h-full w-[77px] bg-[#2962ff] text-sm text-[#e0e6f8]">Publish</button>
            </div>
          </header>

          <div className="mt-px flex flex-1 gap-0.5 bg-[#434651]">
            <Chart
              pane={left}
              legend={{ interval: '1h', ohlc: ['1793.267', '1794.445', '1793.267', '1793.950'], change: '+0.492 (+0.03%)', tone: 'text-[#00a0d6]', inset: 'pt-[7px] pl-[9px]' }}
            />
            <Chart
              active
              pane={right}
              legend={{ interval: '1', ohlc: ['1793.738', '1793.738', '1793.705', '1793.705'], change: '−0.038 (−0.00%)', tone: 'text-[#ffee58]', inset: 'pt-[5px] pl-[7px]' }}
            />
          </div>

          <div className="mt-px flex h-[38px] shrink-0 items-center rounded-b bg-[#131722] pr-4 pl-4">
            <div className="flex gap-[13px]">
              {['1D', '5D', '1M', '3M', '6M', 'YTD', '1Y', '5Y', 'All'].map((r) => <button key={r}>{r}</button>)}
            </div>
            <span className="mx-4 h-[22px] w-px bg-[#2a2e39]" />
            <button aria-label="Go to date"><Icon size={19}><path d="M4 11V7a2 2 0 0 1 2-2h17a2 2 0 0 1 2 2v16a2 2 0 0 1-2 2h-7M4 11h21M9 1v6M20 1v6M1 19h12M9 14l5 5-5 5" strokeWidth="1.500" /></Icon></button>
            <div className="ml-auto flex items-center">
              <button className="text-sm">21:00:25 (UTC)</button>
              <span className="mx-4 h-[22px] w-px bg-[#2a2e39]" />
              <button>%</button>
              <button className="ml-3.5">log</button>
              <button className="ml-3.5">auto</button>
              <button aria-label="Maximize chart" className="ml-3.5"><Icon size={17}><path d="M2 9V5a3 3 0 0 1 3-3h4M19 2h4a3 3 0 0 1 3 3v4M26 19v4a3 3 0 0 1-3 3h-4M9 26H5a3 3 0 0 1-3-3v-4" strokeWidth="1.600" /></Icon></button>
            </div>
          </div>

          <div className="mt-1 flex h-[38px] shrink-0 items-center rounded-t bg-[#131722] pr-4">
            {tabs.map((t) => (
              <button key={t.label} className={`flex h-full shrink-0 items-center justify-center gap-2 border-r border-[#2a2e39] whitespace-nowrap ${t.width}`}>
                {t.label}{t.menu && <Chevron />}
              </button>
            ))}
            <button aria-label="Expand panel" className="ml-auto"><svg width="19" height="9" viewBox="0 0 19 9" fill="none" stroke="currentColor"><path d="m.5 8.500 9-8 9 8" /></svg></button>
            <button aria-label="Maximize panel" className="ml-[18px]"><svg width="17" height="17" viewBox="0 0 17 17" fill="none" stroke="currentColor"><rect x=".5" y=".5" width="16" height="16" rx="2" /><path d="M.5 3.500h16" /></svg></button>
          </div>
        </main>

        <aside aria-label="Panels" className="ml-px flex w-[45px] shrink-0 flex-col bg-[#131722]">
          {panels.map((group, g) => (
            <div key={g} className={g === 2 ? 'pt-1.5' : 'border-b border-[#2a2e39] pb-1.5 [&+&]:pt-1.5'}>
              {group.map((p) => (
                <button key={p.label} aria-label={p.label} className="relative flex h-[50px] w-full items-center justify-center">
                  <svg width="28" height="28" viewBox="0 0 28 28" fill="none" stroke="currentColor" strokeWidth="1.200" className="overflow-visible" aria-hidden="true">{p.art}</svg>
                  {p.live && <span className="absolute top-2 right-1 size-3.5 rounded-full bg-[#ff4a68]" />}
                </button>
              ))}
            </div>
          ))}
          <div className="mt-auto">
            <button aria-label="Object tree" className="flex h-[50px] w-full items-center justify-center"><Icon><path d="m14 2 11 9.500L14 21 3 11.500zM3 15l11 9.500L25 15M3 18.500 14 28l11-9.500" /></Icon></button>
            <button aria-label="Help" className="flex h-[50px] w-full items-center justify-center"><Icon size={26}><circle cx="14" cy="14" r="13" /><path d="M9.500 10.500C9.500 4.500 19 4.500 19 10c0 3.500-4.500 3.500-4.500 8h-2c0-5.500 4.500-5.500 4.500-8 0-3-5-3-5 .5z" /><circle cx="13.500" cy="21.500" r="1.400" /></Icon></button>
          </div>
        </aside>
      </div>
      <div className="h-[3px] shrink-0 border-t border-[#2a2e39] bg-[#101010]" />
    </div>
  );
}
